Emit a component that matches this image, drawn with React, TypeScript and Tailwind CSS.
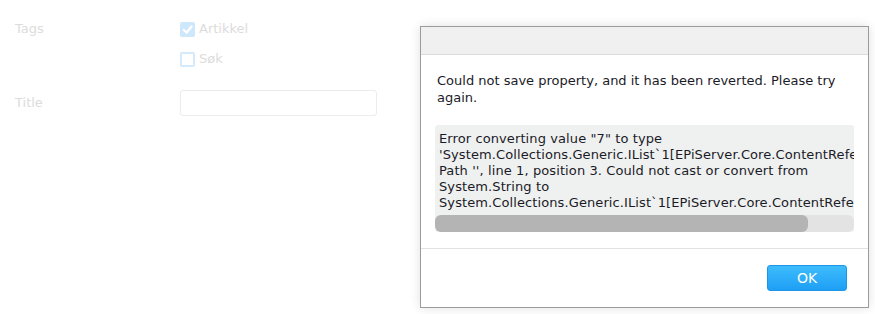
import React from 'react';

const font = { fontFamily: '"DejaVu Sans", Verdana, sans-serif' };

const FieldLabel: React.FC<{ children: React.ReactNode }> = ({ children }) => (
  <div className="w-[165px] shrink-0 text-[13px] leading-[16px] text-[#dcdcdc]">{children}</div>
);

const Check: React.FC<{ checked?: boolean; label: string }> = ({ checked, label }) => (
  <div className="flex items-center h-[16px]">
    {checked ? (
      <span className="w-[15px] h-[15px] rounded-[2px] bg-[#cde8fb] flex items-center justify-center">
        <svg width="11" height="11" viewBox="0 0 12 12">
          <path d="M2 6.5 L5 9.5 L10.5 2.5" stroke="#fff" strokeWidth="2.4" fill="none" strokeLinecap="round" strokeLinejoin="round" />
        </svg>
      </span>
    ) : (
      <span className="w-[15px] h-[15px] rounded-[2px] border-2 border-[#d2eafb] bg-white" />
    )}
    <span className="ml-[4px] text-[13px] text-[#dcdcdc]">{label}</span>
  </div>
);

export default function App() {
  return (
    <div className="relative w-[875px] h-[314px] bg-white overflow-hidden" style={font}>
      {/* faded form behind the dialog */}
      <div className="pl-[15px] pt-[21px] flex flex-col">
        <div className="flex">
          <FieldLabel>Tags</FieldLabel>
          <div className="flex flex-col gap-[14px]">
            <Check checked label="Artikkel" />
            <Check label="Søk" />
          </div>
        </div>
        <div className="flex items-center mt-[23px]">
          <FieldLabel>Title</FieldLabel>
          <div className="w-[197px] h-[26px] rounded-[3px] border border-[#ececec] bg-white" />
        </div>
      </div>

      {/* dialog */}
      <div className="absolute left-[420px] top-[26px] w-[449px] h-[282px] border border-[#9b9b9b] bg-white shadow-[0_0_10px_rgba(0,0,0,0.12)] flex flex-col">
        <div className="h-[28px] bg-[#f0f0f0] border-b border-[#dcdcdc]" />
        <div className="px-[14px] pt-[17px] pb-[16px] border-b border-[#e2e2e2]">
          <p className="pl-[2px] text-[13px] leading-[17px] text-[#1b1b28]">
            Could not save property, and it has been reverted. Please try again.
          </p>
          <div className="mt-[19px] bg-[#eff1f0] rounded-[3px] overflow-hidden">
            <div className="pl-[4px] pt-[6px] pb-[4px] h-[90px] overflow-hidden text-[13px] leading-[16px] tracking-[0.1px] text-[#1b1b28] whitespace-nowrap">
              <div>Error converting value "7" to type</div>
              <div>'System.Collections.Generic.IList`1[EPiServer.Core.ContentReference]'.</div>
              <div>Path '', line 1, position 3. Could not cast or convert from</div>
              <div>System.String to</div>
              <div>System.Collections.Generic.IList`1[EPiServer.Core.ContentReference].</div>
            </div>
            <div className="h-[17px] bg-[#e3e3e3] rounded-[6px]">
              <div className="h-[17px] w-[373px] bg-[#b4b4b4] rounded-[6px]" />
            </div>
          </div>
        </div>
        <div className="flex justify-end pt-[16px] pr-[21px]">
          <button className="w-[80px] h-[26px] rounded-[3px] border border-[#1f95e6] bg-gradient-to-b from-[#3dbcfc] to-[#1d9ff5] text-white text-[14px] leading-[24px]">
            OK
          </button>
        </div>
      </div>
    </div>
  );
}
